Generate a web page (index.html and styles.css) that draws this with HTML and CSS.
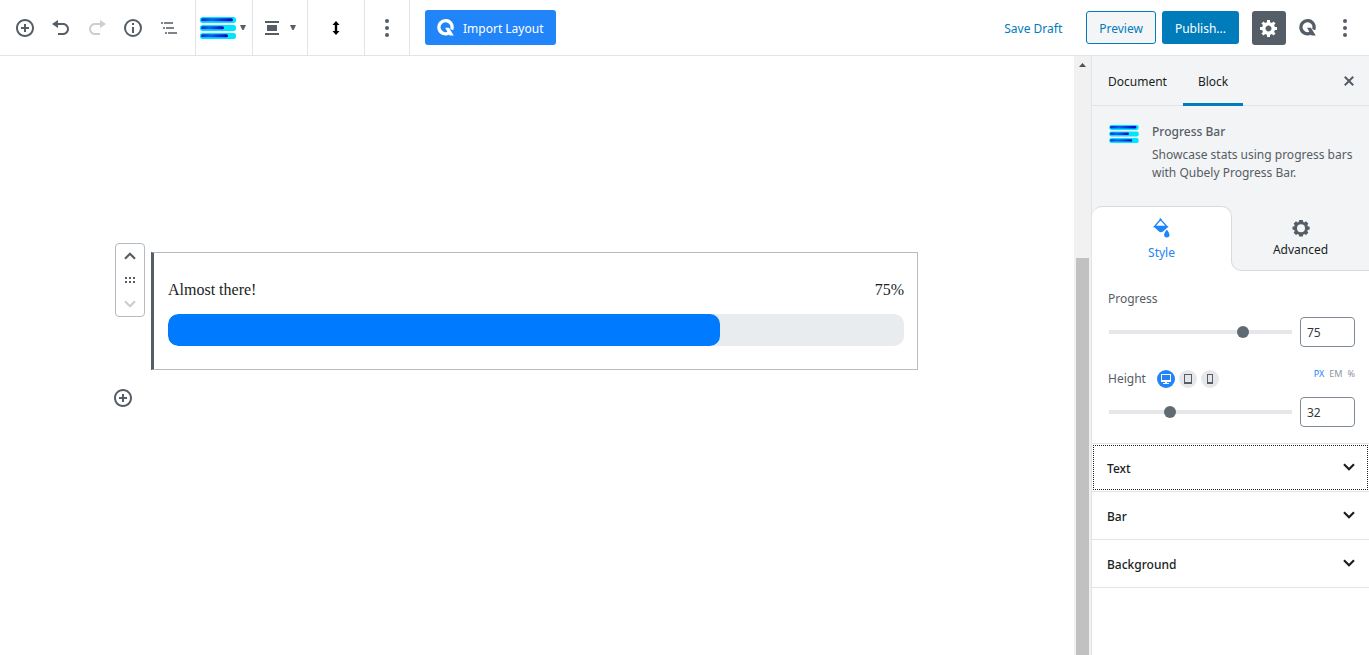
FILE: index.html
```html
<!DOCTYPE html>
<html lang="en">
<head>
<meta charset="utf-8">
<title>Edit Page</title>
<link rel="stylesheet" href="styles.css">
</head>
<body>
<svg class="defs" width="0" height="0" aria-hidden="true">
  <defs>
    <linearGradient id="bar-fill" x1="0" y1="0" x2="1" y2="0.1">
      <stop offset="0" stop-color="#0a1ed8"/><stop offset="0.4" stop-color="#0b62e6"/><stop offset="1" stop-color="#0300c8"/>
    </linearGradient>
    <symbol id="progress" viewBox="0 0 36 22">
      <g fill="#00e5ff"><rect width="36" height="6" rx="2.500"/><rect y="8" width="36" height="6" rx="2.500"/><rect y="16" width="36" height="6" rx="2.500"/></g>
      <g fill="url(#bar-fill)"><rect x="1" y="1.300" width="32" height="3" rx="1.500"/><rect x="1" y="9.300" width="23" height="3" rx="1.500"/><rect x="1" y="17.300" width="27" height="3" rx="1.500"/></g>
    </symbol>
    <symbol id="insert" viewBox="0 0 20 20"><path d="M10 1c-5 0-9 4-9 9s4 9 9 9 9-4 9-9-4-9-9-9zm0 16c-3.9 0-7-3.1-7-7s3.1-7 7-7 7 3.1 7 7-3.1 7-7 7zm1-11H9v3H6v2h3v3h2v-3h3V9h-3V6z"/></symbol>
    <symbol id="gear" viewBox="0 0 20 20"><path d="M18 12h-2.18c-.17.7-.44 1.35-.81 1.93l1.54 1.54-2.1 2.1-1.54-1.54c-.58.36-1.23.63-1.91.79V19H8v-2.18c-.68-.16-1.33-.43-1.91-.79l-1.54 1.54-2.12-2.12 1.54-1.54c-.36-.58-.63-1.23-.79-1.91H1V9.03h2.17c.16-.7.44-1.35.8-1.94L2.43 5.55l2.1-2.1 1.54 1.54c.58-.37 1.24-.64 1.93-.81V2h3v2.18c.68.16 1.33.43 1.91.79l1.54-1.54 2.12 2.12-1.54 1.54c.36.59.64 1.24.8 1.94H18V12zm-8.5 1.5c1.66 0 3-1.34 3-3s-1.34-3-3-3-3 1.34-3 3 1.34 3 3 3z"/></symbol>
    <symbol id="qubely" viewBox="0 0 16 16"><path d="M11 13.200A6.200 6.200 0 1 1 13.800 10" fill="none" stroke="currentColor" stroke-width="3.100"/><path d="M7.600 8.200h3.600l4.600 7.300h-4z"/></symbol>
    <symbol id="more" viewBox="0 0 20 20"><circle cx="10" cy="3" r="2"/><circle cx="10" cy="10" r="2"/><circle cx="10" cy="17" r="2"/></symbol>
    <symbol id="chevron" viewBox="0 0 12 8"><path d="M1 1.2 6 6.2 11 1.2" fill="none" stroke="currentColor" stroke-width="2.2"/></symbol>
    <symbol id="caret" viewBox="0 0 6 5"><path d="M0 0h6L3.6 5H2.4z"/></symbol>
  </defs>
</svg>

<header class="header">
  <div class="tools">
    <button class="tool" aria-label="Add block"><svg width="20" height="20"><use href="#insert"/></svg></button>
    <button class="tool" aria-label="Undo"><svg width="20" height="20" viewBox="0 0 20 20"><path d="M12 5H7V2L1 6l6 4V7h5c2.200 0 4 1.800 4 4s-1.800 4-4 4H7v2h5c3.300 0 6-2.700 6-6s-2.700-6-6-6z"/></svg></button>
    <button class="tool disabled" aria-label="Redo" disabled><svg width="20" height="20" viewBox="0 0 20 20"><path d="M8 5h5V2l6 4-6 4V7H8c-2.200 0-4 1.800-4 4s1.800 4 4 4h5v2H8c-3.300 0-6-2.700-6-6s2.700-6 6-6z"/></svg></button>
    <button class="tool" aria-label="Content structure"><svg width="20" height="20" viewBox="0 0 20 20"><circle cx="10" cy="10" r="8" fill="none" stroke="currentColor" stroke-width="2"/><path d="M9 5h2v2H9zM9 9h2v6H9z"/></svg></button>
    <button class="tool muted" aria-label="Block navigation"><svg width="20" height="20" viewBox="0 0 20 20"><path d="M2 4h2v2H2zM5 4h9v2H5zM4 9h2v2H4zM7 9h8v2H7zM6 14h2v2H6zM9 14h9v2H9z"/></svg></button>
  </div>
  <div class="group group-type"><button class="tool wide" aria-label="Change block type"><svg width="36" height="22"><use href="#progress"/></svg><svg width="6" height="5"><use href="#caret"/></svg></button></div>
  <div class="group group-align"><button class="tool align" aria-label="Change alignment"><svg width="20" height="20" viewBox="0 0 20 20"><path d="M3 3h14v2H3zM5 7h10v6H5zM3 15h14v2H3z"/></svg><svg width="6" height="5"><use href="#caret"/></svg></button></div>
  <div class="group group-move"><button class="tool black" aria-label="Vertical spacing"><svg width="8" height="14" viewBox="0 0 8 14"><path d="M4 0 7.500 4H5.200v6h2.300L4 14 .5 10h2.300V4H.5z"/></svg></button></div>
  <div class="group group-more"><button class="tool" aria-label="More options"><svg width="20" height="20"><use href="#more"/></svg></button></div>
  <div class="group group-import"><button class="import"><svg width="17" height="17"><use href="#qubely"/></svg><span>Import Layout</span></button></div>
  <div class="actions">
    <button class="link">Save Draft</button>
    <button class="preview">Preview</button>
    <button class="publish">Publish...</button>
    <button class="tool settings" aria-label="Settings"><svg width="20" height="20"><use href="#gear"/></svg></button>
    <button class="tool brand" aria-label="Qubely"><svg width="17" height="17"><use href="#qubely"/></svg></button>
    <button class="tool" aria-label="More tools"><svg width="20" height="20"><use href="#more"/></svg></button>
  </div>
</header>

<div class="workspace">
  <main class="canvas">
    <section class="block-row">
      <div class="mover">
        <button aria-label="Move up"><svg class="flip" width="12" height="8"><use href="#chevron"/></svg></button>
        <button aria-label="Drag"><svg width="10" height="6" viewBox="0 0 10 6"><path d="M0 0h2v2H0zM4 0h2v2H4zM8 0h2v2H8zM0 4h2v2H0zM4 4h2v2H4zM8 4h2v2H8z"/></svg></button>
        <button class="disabled" aria-label="Move down" disabled><svg width="12" height="8"><use href="#chevron"/></svg></button>
      </div>
      <div class="block">
        <div class="caption"><span>Almost there!</span><span>75%</span></div>
        <div class="bar"><div class="bar-value" style="width:75%"></div></div>
      </div>
    </section>
    <button class="appender" aria-label="Add block"><svg width="20" height="20"><use href="#insert"/></svg></button>
  </main>
  <div class="scrollbar"><svg width="7" height="4" viewBox="0 0 7 4"><path d="M0 4 3.500 0 7 4z"/></svg><div class="thumb"></div></div>
  <aside class="sidebar">
    <div class="tabs">
      <button>Document</button><button class="active">Block</button>
      <button class="close" aria-label="Close settings"><svg width="20" height="20" viewBox="0 0 20 20"><path d="M14.950 6.460 11.410 10l3.540 3.540-1.410 1.410L10 11.420l-3.530 3.530-1.420-1.420L8.580 10 5.050 6.470l1.420-1.420L10 8.580l3.540-3.530z"/></svg></button>
    </div>
    <div class="card">
      <svg width="30" height="18"><use href="#progress"/></svg>
      <div><h2>Progress Bar</h2><p>Showcase stats using progress bars with Qubely Progress Bar.</p></div>
    </div>
    <div class="modes">
      <button class="mode active"><svg width="20" height="20" viewBox="0 0 20 20"><path d="M8.500 1.500 2.500 8.500h12.500z" fill="none" stroke="currentColor" stroke-width="1.300"/><path d="M1.500 8.500h15l-5.200 4.800q-2.500 2-4.600 0zM7.500.5l1-.5 1.200 2-1.200 1zM14.800 11.500c1 1.700 2.700 3.400 2.700 5.300a2.700 2.700 0 0 1-5.400 0c0-1.900 1.700-3.600 2.700-5.300z"/></svg><span>Style</span></button>
      <button class="mode"><svg width="18" height="18" viewBox="0 0 18 18"><path fill-rule="evenodd" d="M7.200 1h3.600l.5 2 .9.400 1.800-1.100 2.300 2.300-1 1.800.4.900 2 .5v2.800l-2 .5-.4.900 1 1.800-2.300 2.300-1.800-1-.9.400-.5 2H7.200l-.5-2-.9-.4-1.800 1-2.300-2.300 1-1.800-.4-.9-1.800-.5V7.800l1.800-.5.400-.9-1-1.800L4 2.300l1.800 1.100.9-.4zM9 5.200a4 4 0 1 0 0 8 4 4 0 0 0 0-8z"/></svg><span>Advanced</span></button>
    </div>
    <div class="controls">
      <label class="label" for="progress-range">Progress</label>
      <div class="slider"><input type="range" id="progress-range" min="0" max="100" value="75"><input type="text" inputmode="numeric" aria-label="Progress value" value="75"></div>
      <div class="label height-label">
        <label for="height-range">Height</label>
        <div class="devices">
          <button class="active" aria-label="Desktop"><svg width="12" height="12" viewBox="0 0 12 12"><path fill-rule="evenodd" d="M1 1h10v8H7v1h2v1H3v-1h2V9H1zM2 2v5h8V2z"/></svg></button>
          <button aria-label="Tablet"><svg width="12" height="12" viewBox="0 0 12 12"><path fill-rule="evenodd" d="M2 1h8v10H2zM3 2v7h6V2z"/></svg></button>
          <button aria-label="Phone"><svg width="12" height="12" viewBox="0 0 12 12"><path fill-rule="evenodd" d="M3 1h6v10H3zM4 2v7h4V2z"/></svg></button>
        </div>
        <div class="units"><button class="active">PX</button><button>EM</button><button>%</button></div>
      </div>
      <div class="slider"><input type="range" id="height-range" min="0" max="100" value="32"><input type="text" inputmode="numeric" aria-label="Height value" value="32"></div>
    </div>
    <div class="panel"><button class="focused">Text<svg width="12" height="8"><use href="#chevron"/></svg></button></div>
    <div class="panel"><button>Bar<svg width="12" height="8"><use href="#chevron"/></svg></button></div>
    <div class="panel"><button>Background<svg width="12" height="8"><use href="#chevron"/></svg></button></div>
  </aside>
</div>
</body>
</html>
```
FILE: styles.css
```css
* { box-sizing: border-box; }
body { margin: 0; height: 100vh; display: flex; flex-direction: column; background: #fff; color: #555d66; font-family: "Noto Sans", "Open Sans", sans-serif; font-size: 12px; line-height: 18px; overflow: hidden; }
button { margin: 0; padding: 0; border: 0; background: none; color: inherit; font: inherit; display: flex; align-items: center; justify-content: center; white-space: nowrap; }
svg { fill: currentColor; flex: none; display: block; }
.defs { position: absolute; }
.disabled { color: #ccced1; }

.header { flex: none; height: 56px; display: flex; border-bottom: 1px solid #e2e4e7; }
.tools { display: flex; align-items: center; padding: 0 8px 0 7px; }
.tool { width: 36px; height: 36px; }
.muted { color: #7e848b; }
.black { color: #000; }
.group { display: flex; align-items: center; justify-content: center; border-left: 1px solid #e2e4e7; }
.group-type { width: 57px; justify-content: flex-start; padding-left: 4px; }
.group-align { width: 55px; justify-content: flex-start; padding-left: 9px; }
.group-move { width: 57px; }
.group-more { width: 45px; }
.group-import { padding-left: 15px; }
.wide { width: 46px; gap: 4px; }
.align { width: 34px; gap: 8px; }
.import { height: 35px; padding: 0 12px; gap: 9px; border-radius: 3px; background: #2184f9; color: #fff; }
.import span { padding-top: 2px; }
.actions { display: flex; align-items: center; margin-left: auto; padding-right: 6px; }
.link { color: #007cba; margin-right: 24px; padding-top: 2px; }
.preview { height: 33px; padding: 2px 12px 0; border: 1px solid #007cba; border-radius: 3px; background: #f3f5f6; color: #007cba; margin-right: 6px; }
.publish { height: 33px; padding: 2px 13px 0; border-radius: 3px; background: #007cba; color: #fff; margin-right: 13px; }
.settings { width: 34px; height: 34px; border-radius: 3px; background: #555d66; color: #fff; margin-right: 3px; }
.brand { margin-right: 2px; }

.workspace { flex: 1; min-height: 0; display: flex; }
.canvas { flex: 1; padding: 187px 156px 0 115px; }
.block-row { display: flex; align-items: flex-start; gap: 6px; }
.mover { flex: none; width: 30px; height: 74px; border: 1px solid #b5bcc2; border-radius: 4px; display: flex; flex-direction: column; }
.mover button { flex: 1; }
.flip { transform: rotate(180deg); }
.block { flex: 1; margin-top: 9px; padding: 25px 13px 23px 14px; border: 1px solid #b5bcc2; border-left: 3px solid #555d66; color: #191e23; font-family: "Liberation Serif", serif; font-size: 16px; }
.caption { display: flex; justify-content: space-between; line-height: 24px; margin-bottom: 12px; }
.bar { height: 32px; border-radius: 10px; background: #e9ecef; overflow: hidden; }
.bar-value { height: 100%; border-radius: 10px; background: #007bff; }
.appender { margin-top: 18px; margin-left: -2px; }

.scrollbar { flex: none; width: 17px; display: flex; flex-direction: column; align-items: center; padding-top: 7px; background: #f1f1f1; color: #505050; }
.thumb { flex: 1; width: 13px; margin-top: 191px; background: #c1c1c1; }

.sidebar { flex: none; width: 278px; border-left: 1px solid #e2e4e7; }
.tabs { display: flex; height: 50px; border-bottom: 1px solid #e2e4e7; background: #f3f4f5; color: #191e23; }
.tabs button { height: 50px; padding: 5px 16px 0; border-bottom: 3px solid transparent; }
.tabs .active { padding: 5px 15px 0; border-color: #007cba; }
.tabs .close { margin-left: auto; padding: 3px 10px 0 0; color: #555d66; }
.card { display: flex; gap: 13px; padding: 17px 12px 24px 17px; background: #f3f4f5; }
.card svg { margin-top: 2px; }
.card h2 { margin: 0 0 5px; font-size: 12px; font-weight: 500; line-height: 18px; }
.card p { margin: 0; }
.modes { display: flex; align-items: flex-start; height: 65px; background: linear-gradient(#f3f4f5 50%, #fff 50%); }
.mode { flex: 1; flex-direction: column; justify-content: flex-start; height: 53px; gap: 4px; margin: 12px 0 0 -1px; padding-top: 1px; color: #555d66; background: #f3f4f5; border: 1px solid #d8dbde; border-width: 0 0 1px 1px; border-bottom-left-radius: 10px; }
.mode span { color: #191e23; }
.mode.active { flex: none; width: 140px; height: 55px; gap: 6px; margin: 0; padding-top: 11px; color: #2184f9; background: #fff; border-width: 1px 1px 0 0; border-radius: 10px 10px 0 0; }
.mode.active span { color: #2184f9; }
.controls { padding: 18px 14px 16px 16px; }
.label { display: flex; height: 20px; align-items: center; }
.slider { display: flex; align-items: center; gap: 8px; margin-top: 8px; }
.height-label { margin-top: 22px; }
.slider input[type="range"] { appearance: none; flex: 1; min-width: 0; height: 12px; margin: 0 0 0 1px; background: linear-gradient(#e6e7ea, #e6e7ea) center / 100% 4px no-repeat; border-radius: 2px; }
.slider input::-webkit-slider-thumb { appearance: none; width: 12px; height: 12px; border-radius: 50%; background: #606a73; }
.slider input[type="text"] { width: 55px; height: 30px; padding: 0 6px; border: 1px solid #7e8993; border-radius: 4px; background: #fff; color: #32373c; font: inherit; }
.devices { display: flex; gap: 4px; margin-left: 11px; }
.devices button { width: 18px; height: 18px; border-radius: 50%; background: #e6e7ea; }
.devices .active { background: #2184f9; color: #fff; }
.units { display: flex; gap: 5px; margin-left: auto; align-self: flex-start; font-size: 9px; line-height: 10px; color: #8d96a0; }
.units .active { color: #2184f9; }
.panel { height: 48px; border-top: 1px solid #e2e4e7; }
.panel:last-child { height: 49px; border-bottom: 1px solid #e2e4e7; }
.panel button { width: 100%; height: 47px; justify-content: space-between; padding: 2px 14px 0 15px; color: #191e23; font-weight: 500; }
.panel svg { margin-bottom: 3px; }
.focused { outline: 1px dotted #191e23; outline-offset: -2px; }
```
